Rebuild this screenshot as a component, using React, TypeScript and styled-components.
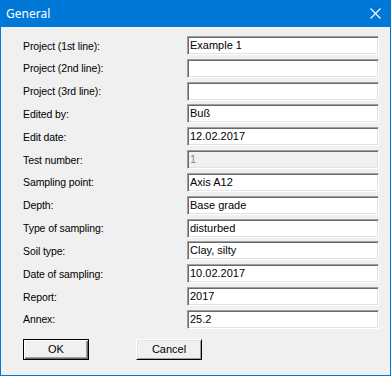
import React from "react";
import styled, { createGlobalStyle } from "styled-components";

const GlobalStyle = createGlobalStyle`
  html, body {
    margin: 0;
    padding: 0;
    background: #f0f0f0;
  }
`

const Window = styled.div`
  box-sizing: border-box;
  width: 391px;
  height: 376px;
  border: 1px solid #0078d7;
  background: #f0f0f0;
  display: flex;
  flex-direction: column;
  font-family: "Liberation Sans", Arial, sans-serif;
`

const TitleBar = styled.div`
  height: 25px;
  background: #0078d7;
  display: flex;
  align-items: center;
  justify-content: space-between;
  padding: 0 8px 1px 5px;
  color: #ffffff;
  font-family: "Noto Sans", "Open Sans", sans-serif;
  font-size: 12px;
`

const CloseButton = styled.div`
  width: 14px;
  height: 14px;
  display: flex;
  align-items: center;
  justify-content: center;
`

const Body = styled.div`
  padding: 9px 11px 0 21px;
  display: flex;
  flex-direction: column;
`

const Form = styled.div`
  display: grid;
  grid-template-columns: 165px 192px;
  grid-auto-rows: 19px;
  row-gap: 3.83px;
  align-items: center;
`

const Label = styled.label`
  font-size: 10.5px;
  color: #000000;
  padding-left: 1px;
  letter-spacing: -0.1px;
`

const Field = styled.div<{ disabled?: boolean }>`
  box-sizing: border-box;
  height: 19px;
  border-top: 1px solid #a0a0a0;
  border-left: 1px solid #a0a0a0;
  border-right: 1px solid #ffffff;
  border-bottom: 1px solid #ffffff;
  box-shadow: inset 1px 1px 0 #696969, inset -1px -1px 0 #e3e3e3;
  background: ${props => props.disabled ? '#f0f0f0' : '#ffffff'};
  color: ${props => props.disabled ? '#8a8a8a' : '#000000'};
  font-size: 11px;
  line-height: 17px;
  padding-left: 2px;
  white-space: nowrap;
  overflow: hidden;
`

const ButtonRow = styled.div`
  display: flex;
  gap: 47px;
  margin-top: 10px;
  padding-left: 1px;
`

const Button = styled.button<{ primary?: boolean }>`
  box-sizing: border-box;
  width: 66px;
  height: 21px;
  padding: 0;
  margin: 0;
  background: #f0f0f0;
  font-family: "Liberation Sans", Arial, sans-serif;
  font-size: 11px;
  color: #000000;
  border: 1px solid ${props => props.primary ? '#000000' : '#ffffff'};
  border-right-color: #000000;
  border-bottom-color: #000000;
  box-shadow: ${props => props.primary
    ? 'inset 1px 1px 0 #ffffff, inset -1px -1px 0 #696969, inset -2px -2px 0 #a0a0a0'
    : 'inset 1px 1px 0 #e3e3e3, inset -1px -1px 0 #a0a0a0'};
`

const rows: { label: string; value: string; disabled?: boolean }[] = [
  { label: 'Project (1st line):', value: 'Example 1' },
  { label: 'Project (2nd line):', value: '' },
  { label: 'Project (3rd line):', value: '' },
  { label: 'Edited by:', value: 'Buß' },
  { label: 'Edit date:', value: '12.02.2017' },
  { label: 'Test number:', value: '1', disabled: true },
  { label: 'Sampling point:', value: 'Axis A12' },
  { label: 'Depth:', value: 'Base grade' },
  { label: 'Type of sampling:', value: 'disturbed' },
  { label: 'Soil type:', value: 'Clay, silty' },
  { label: 'Date of sampling:', value: '10.02.2017' },
  { label: 'Report:', value: '2017' },
  { label: 'Annex:', value: '25.2' },
];

export default function App() {
  return (
    <>
      <GlobalStyle />
      <Window>
        <TitleBar>
          <span>General</span>
          <CloseButton>
            <svg width="11" height="11" viewBox="0 0 11 11">
              <path d="M0.5 0.5 L10.5 10.5 M10.5 0.5 L0.5 10.5" stroke="#ffffff" strokeWidth="1.1" />
            </svg>
          </CloseButton>
        </TitleBar>
        <Body>
          <Form>
            {rows.map(r => (
              <React.Fragment key={r.label}>
                <Label>{r.label}</Label>
                <Field disabled={r.disabled}>{r.value}</Field>
              </React.Fragment>
            ))}
          </Form>
          <ButtonRow>
            <Button primary>OK</Button>
            <Button>Cancel</Button>
          </ButtonRow>
        </Body>
      </Window>
    </>
  );
}
